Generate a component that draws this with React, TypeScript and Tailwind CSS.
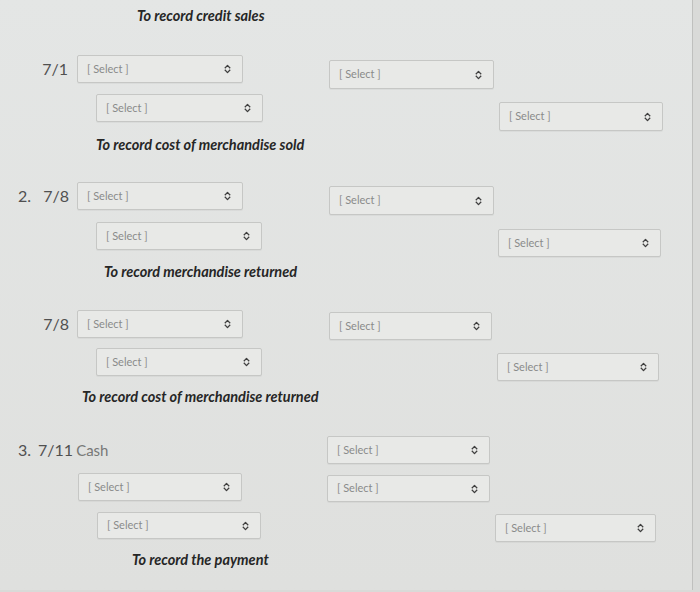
import React from "react";

function Chevrons() {
  return (
    <svg width="9" height="10" viewBox="0 0 9 10" fill="none" className="shrink-0">
      <path d="M1.8 4.2 L4.5 1.4 L7.2 4.2" stroke="#3f3f3f" strokeWidth="1.3" strokeLinejoin="round" />
      <path d="M1.8 5.8 L4.5 8.6 L7.2 5.8" stroke="#3f3f3f" strokeWidth="1.3" strokeLinejoin="round" />
    </svg>
  );
}

function Select({ w, h = "h-[28px]" }: { w: string; h?: string }) {
  return (
    <div
      className={`${w} ${h} shrink-0 flex items-center justify-between pl-[9px] pr-[10px] border border-[#c6c7c5] rounded-[2px] bg-[#e8e9e7] shadow-[0_1px_0_rgba(0,0,0,0.04)]`}
    >
      <span className="text-[11px] text-[#8a8b8a]">[ Select ]</span>
      <Chevrons />
    </div>
  );
}

function Caption({ text, pad }: { text: string; pad: string }) {
  return (
    <div className={`${pad} h-[20px] leading-[20px] text-[14.5px] font-bold italic text-[#262626]`}>{text}</div>
  );
}

export default function App() {
  return (
    <div
      className="w-[700px] h-[592px] overflow-hidden flex bg-[#d9dad8]"
      style={{ fontFamily: "Lato, 'Open Sans', sans-serif" }}
    >
      <div className="w-[693px] h-[590px] border-r border-[#bfc0be] bg-gradient-to-b from-[#e4e6e5] to-[#dfe0de] flex flex-col">
        {/* Entry 1 */}
        <div className="pt-[6px]">
          <Caption text="To record credit sales" pad="pl-[137px]" />
        </div>
        <div className="mt-[29px] flex items-start">
          <div className="w-[77px] pr-[9px] text-right text-[16px] leading-[28px] text-[#505050]">7/1</div>
          <Select w="w-[166px]" />
          <div className="ml-[86px] mt-[5px]">
            <Select w="w-[165px]" h="h-[29px]" />
          </div>
        </div>
        <div className="mt-[5px] flex items-start">
          <div className="ml-[96px]">
            <Select w="w-[167px]" />
          </div>
          <div className="ml-[236px] mt-[8px]">
            <Select w="w-[164px]" h="h-[29px]" />
          </div>
        </div>
        <div className="mt-[4px]">
          <Caption text="To record cost of merchandise sold" pad="pl-[96px]" />
        </div>

        {/* Entry 2 */}
        <div className="mt-[27px] flex items-start">
          <div className="w-[77px] pl-[18px] pr-[8px] flex justify-between text-[16px] leading-[28px] text-[#505050]">
            <span>2.</span>
            <span>7/8</span>
          </div>
          <Select w="w-[166px]" />
          <div className="ml-[86px] mt-[4px]">
            <Select w="w-[165px]" h="h-[29px]" />
          </div>
        </div>
        <div className="mt-[7px] flex items-start">
          <div className="ml-[96px]">
            <Select w="w-[166px]" />
          </div>
          <div className="ml-[236px] mt-[7px]">
            <Select w="w-[163px]" />
          </div>
        </div>
        <div className="mt-[5px]">
          <Caption text="To record merchandise returned" pad="pl-[104px]" />
        </div>

        {/* Entry 2b */}
        <div className="mt-[28px] flex items-start">
          <div className="w-[77px] pr-[8px] text-right text-[16px] leading-[28px] text-[#505050]">7/8</div>
          <Select w="w-[166px]" />
          <div className="ml-[86px] mt-[2px]">
            <Select w="w-[163px]" />
          </div>
        </div>
        <div className="mt-[8px] flex items-start">
          <div className="ml-[96px]">
            <Select w="w-[166px]" />
          </div>
          <div className="ml-[235px] mt-[5px]">
            <Select w="w-[162px]" />
          </div>
        </div>
        <div className="mt-[6px]">
          <Caption text="To record cost of merchandise returned" pad="pl-[82px]" />
        </div>

        {/* Entry 3 */}
        <div className="mt-[29px] flex items-start">
          <div className="w-[327px] pl-[18px] pt-[4px] text-[16px] leading-[20px] text-[#505050]">
            <span className="mr-[7px]">3.</span>
            <span>7/11</span>
            <span className="ml-[3px] text-[15px] text-[#777877]">Cash</span>
          </div>
          <Select w="w-[163px]" />
        </div>
        <div className="mt-[9px] flex items-start">
          <div className="ml-[78px]">
            <Select w="w-[164px]" />
          </div>
          <div className="ml-[85px] mt-[2px]">
            <Select w="w-[163px]" h="h-[27px]" />
          </div>
        </div>
        <div className="mt-[10px] flex items-start">
          <div className="ml-[97px]">
            <Select w="w-[164px]" h="h-[27px]" />
          </div>
          <div className="ml-[234px] mt-[2px]">
            <Select w="w-[161px]" />
          </div>
        </div>
        <div className="mt-[8px]">
          <Caption text="To record the payment" pad="pl-[132px]" />
        </div>
      </div>
    </div>
  );
}
